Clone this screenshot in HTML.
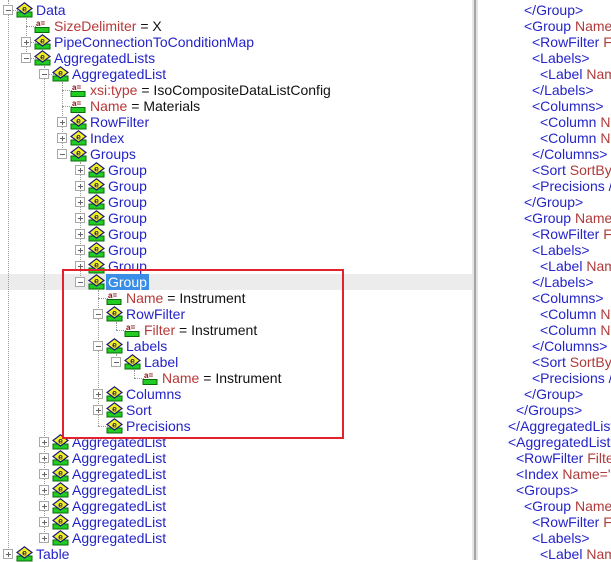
<!DOCTYPE html>
<html><head><meta charset="utf-8"><style>
body{margin:0;width:611px;height:560px;overflow:hidden;background:#fff;font-family:"Liberation Sans",sans-serif;font-size:14px;position:relative}
.r{position:absolute;height:16px;line-height:16px;white-space:nowrap}
.t{position:absolute;top:0;color:#2424c8}
.an{color:#b83838}.av{color:#111}
.x{position:absolute;width:8px;height:8px;border:1px solid #a8a8a8;background:#fff;top:3px}
.x:before{content:"";position:absolute;left:2px;top:4px;width:5px;height:1px;background:#666;margin-top:-0.5px}
.p:after{content:"";position:absolute;left:4px;top:2px;width:1px;height:5px;background:#666}
.i{position:absolute;top:0;width:17px;height:16px}
.v{position:absolute;width:0;border-left:1px dotted #9a9a9a}
.h{position:absolute;height:0;border-top:1px dotted #9a9a9a}
.rp{position:absolute;left:478px;top:0;width:133px;height:560px;overflow:hidden}
.rp div{position:absolute;height:16px;line-height:16px;white-space:nowrap;color:#2424c8}
.rp span{color:#b03a3a}
</style></head><body>
<svg width="0" height="0" style="position:absolute">
<symbol id="e" viewBox="0 0 17 16"><rect x="1" y="10" width="15" height="5" fill="#22cc22" stroke="#0a6a0a"/><path d="M8.5 0.8 L16 6.5 L8.5 12 L1 6.5 Z" fill="#f4f020" stroke="#1a1a7a" stroke-width="1.2"/><text x="8.5" y="9.4" font-size="8.5" font-family="Liberation Sans" text-anchor="middle" fill="#1a1a7a" font-weight="bold">e</text></symbol>
<symbol id="a" viewBox="0 0 17 16"><rect x="1" y="9.5" width="14" height="5" fill="#22cc22" stroke="#0a6a0a"/><text x="2" y="8" font-size="8" font-family="Liberation Sans" fill="#8a1010" font-weight="bold">a=</text></symbol>
</svg>
<div style="position:absolute;left:0;top:274px;width:472px;height:16px;background:#ececec"></div>
<div class="v" style="left:8px;top:0;height:554px"></div>
<div class="v" style="left:26px;top:18px;height:40px"></div>
<div class="v" style="left:44px;top:66px;height:472px"></div>
<div class="v" style="left:62px;top:82px;height:72px"></div>
<div class="v" style="left:80px;top:162px;height:120px"></div>
<div class="v" style="left:98px;top:290px;height:136px"></div>
<div class="v" style="left:116px;top:322px;height:8px"></div>
<div class="v" style="left:116px;top:354px;height:8px"></div>
<div class="v" style="left:134px;top:370px;height:8px"></div>
<div class="r" style="top:2px;left:0"><div class="h" style="left:8px;top:8px;width:10px"></div><div class="x" style="left:3px"></div><svg class="i" style="left:16px"><use href="#e"/></svg><span class="t" style="left:36px">Data</span></div>
<div class="r" style="top:18px;left:0"><div class="h" style="left:26px;top:8px;width:10px"></div><svg class="i" style="left:34px"><use href="#a"/></svg><span class="t" style="left:54px"><span class="an">SizeDelimiter</span><span class="av"> = X</span></span></div>
<div class="r" style="top:34px;left:0"><div class="h" style="left:26px;top:8px;width:10px"></div><div class="x p" style="left:21px"></div><svg class="i" style="left:34px"><use href="#e"/></svg><span class="t" style="left:54px">PipeConnectionToConditionMap</span></div>
<div class="r" style="top:50px;left:0"><div class="h" style="left:26px;top:8px;width:10px"></div><div class="x" style="left:21px"></div><svg class="i" style="left:34px"><use href="#e"/></svg><span class="t" style="left:54px">AggregatedLists</span></div>
<div class="r" style="top:66px;left:0"><div class="h" style="left:44px;top:8px;width:10px"></div><div class="x" style="left:39px"></div><svg class="i" style="left:52px"><use href="#e"/></svg><span class="t" style="left:72px">AggregatedList</span></div>
<div class="r" style="top:82px;left:0"><div class="h" style="left:62px;top:8px;width:10px"></div><svg class="i" style="left:70px"><use href="#a"/></svg><span class="t" style="left:90px"><span class="an">xsi:type</span><span class="av"> = IsoCompositeDataListConfig</span></span></div>
<div class="r" style="top:98px;left:0"><div class="h" style="left:62px;top:8px;width:10px"></div><svg class="i" style="left:70px"><use href="#a"/></svg><span class="t" style="left:90px"><span class="an">Name</span><span class="av"> = Materials</span></span></div>
<div class="r" style="top:114px;left:0"><div class="x p" style="left:57px"></div><svg class="i" style="left:70px"><use href="#e"/></svg><span class="t" style="left:90px">RowFilter</span></div>
<div class="r" style="top:130px;left:0"><div class="x p" style="left:57px"></div><svg class="i" style="left:70px"><use href="#e"/></svg><span class="t" style="left:90px">Index</span></div>
<div class="r" style="top:146px;left:0"><div class="x" style="left:57px"></div><svg class="i" style="left:70px"><use href="#e"/></svg><span class="t" style="left:90px">Groups</span></div>
<div class="r" style="top:162px;left:0"><div class="x p" style="left:75px"></div><svg class="i" style="left:88px"><use href="#e"/></svg><span class="t" style="left:108px">Group</span></div>
<div class="r" style="top:178px;left:0"><div class="x p" style="left:75px"></div><svg class="i" style="left:88px"><use href="#e"/></svg><span class="t" style="left:108px">Group</span></div>
<div class="r" style="top:194px;left:0"><div class="x p" style="left:75px"></div><svg class="i" style="left:88px"><use href="#e"/></svg><span class="t" style="left:108px">Group</span></div>
<div class="r" style="top:210px;left:0"><div class="x p" style="left:75px"></div><svg class="i" style="left:88px"><use href="#e"/></svg><span class="t" style="left:108px">Group</span></div>
<div class="r" style="top:226px;left:0"><div class="x p" style="left:75px"></div><svg class="i" style="left:88px"><use href="#e"/></svg><span class="t" style="left:108px">Group</span></div>
<div class="r" style="top:242px;left:0"><div class="x p" style="left:75px"></div><svg class="i" style="left:88px"><use href="#e"/></svg><span class="t" style="left:108px">Group</span></div>
<div class="r" style="top:258px;left:0"><div class="x p" style="left:75px"></div><svg class="i" style="left:88px"><use href="#e"/></svg><span class="t" style="left:108px">Group</span></div>
<div class="r" style="top:274px;left:0"><div class="x" style="left:75px"></div><svg class="i" style="left:88px"><use href="#e"/></svg><span class="t" style="left:106px;background:#3a8ee6;color:#fff;padding:0 2px">Group</span></div>
<div class="r" style="top:290px;left:0"><div class="h" style="left:98px;top:8px;width:10px"></div><svg class="i" style="left:106px"><use href="#a"/></svg><span class="t" style="left:126px"><span class="an">Name</span><span class="av"> = Instrument</span></span></div>
<div class="r" style="top:306px;left:0"><div class="x" style="left:93px"></div><svg class="i" style="left:106px"><use href="#e"/></svg><span class="t" style="left:126px">RowFilter</span></div>
<div class="r" style="top:322px;left:0"><div class="h" style="left:116px;top:8px;width:10px"></div><svg class="i" style="left:124px"><use href="#a"/></svg><span class="t" style="left:144px"><span class="an">Filter</span><span class="av"> = Instrument</span></span></div>
<div class="r" style="top:338px;left:0"><div class="x" style="left:93px"></div><svg class="i" style="left:106px"><use href="#e"/></svg><span class="t" style="left:126px">Labels</span></div>
<div class="r" style="top:354px;left:0"><div class="x" style="left:111px"></div><svg class="i" style="left:124px"><use href="#e"/></svg><span class="t" style="left:144px">Label</span></div>
<div class="r" style="top:370px;left:0"><div class="h" style="left:134px;top:8px;width:10px"></div><svg class="i" style="left:142px"><use href="#a"/></svg><span class="t" style="left:162px"><span class="an">Name</span><span class="av"> = Instrument</span></span></div>
<div class="r" style="top:386px;left:0"><div class="x p" style="left:93px"></div><svg class="i" style="left:106px"><use href="#e"/></svg><span class="t" style="left:126px">Columns</span></div>
<div class="r" style="top:402px;left:0"><div class="x p" style="left:93px"></div><svg class="i" style="left:106px"><use href="#e"/></svg><span class="t" style="left:126px">Sort</span></div>
<div class="r" style="top:418px;left:0"><div class="h" style="left:98px;top:8px;width:10px"></div><svg class="i" style="left:106px"><use href="#e"/></svg><span class="t" style="left:126px">Precisions</span></div>
<div class="r" style="top:434px;left:0"><div class="x p" style="left:39px"></div><svg class="i" style="left:52px"><use href="#e"/></svg><span class="t" style="left:72px">AggregatedList</span></div>
<div class="r" style="top:450px;left:0"><div class="x p" style="left:39px"></div><svg class="i" style="left:52px"><use href="#e"/></svg><span class="t" style="left:72px">AggregatedList</span></div>
<div class="r" style="top:466px;left:0"><div class="x p" style="left:39px"></div><svg class="i" style="left:52px"><use href="#e"/></svg><span class="t" style="left:72px">AggregatedList</span></div>
<div class="r" style="top:482px;left:0"><div class="x p" style="left:39px"></div><svg class="i" style="left:52px"><use href="#e"/></svg><span class="t" style="left:72px">AggregatedList</span></div>
<div class="r" style="top:498px;left:0"><div class="x p" style="left:39px"></div><svg class="i" style="left:52px"><use href="#e"/></svg><span class="t" style="left:72px">AggregatedList</span></div>
<div class="r" style="top:514px;left:0"><div class="x p" style="left:39px"></div><svg class="i" style="left:52px"><use href="#e"/></svg><span class="t" style="left:72px">AggregatedList</span></div>
<div class="r" style="top:530px;left:0"><div class="x p" style="left:39px"></div><svg class="i" style="left:52px"><use href="#e"/></svg><span class="t" style="left:72px">AggregatedList</span></div>
<div class="r" style="top:546px;left:0"><div class="x p" style="left:3px"></div><svg class="i" style="left:16px"><use href="#e"/></svg><span class="t" style="left:36px">Table</span></div>
<div style="position:absolute;left:62px;top:269px;width:278px;height:166px;border:2px solid #e4222e"></div>
<div style="position:absolute;left:472px;top:0;width:2px;height:560px;background:#e6e6e6"></div>
<div style="position:absolute;left:474px;top:0;width:2px;height:560px;background:#a4a4a4"></div>
<div style="position:absolute;left:476px;top:0;width:2px;height:560px;background:#e2e2e2"></div>
<div class="rp">
<div style="top:2px;left:46px">&lt;/Group&gt;</div>
<div style="top:18px;left:46px">&lt;Group <span>Name</span></div>
<div style="top:34px;left:54px">&lt;RowFilter <span>Fi</span></div>
<div style="top:50px;left:54px">&lt;Labels&gt;</div>
<div style="top:66px;left:62px">&lt;Label <span>Nam</span></div>
<div style="top:82px;left:54px">&lt;/Labels&gt;</div>
<div style="top:98px;left:54px">&lt;Columns&gt;</div>
<div style="top:114px;left:62px">&lt;Column <span>N</span></div>
<div style="top:130px;left:62px">&lt;Column <span>N</span></div>
<div style="top:146px;left:54px">&lt;/Columns&gt;</div>
<div style="top:162px;left:54px">&lt;Sort <span>SortBy=</span></div>
<div style="top:178px;left:54px">&lt;Precisions /</div>
<div style="top:194px;left:46px">&lt;/Group&gt;</div>
<div style="top:210px;left:46px">&lt;Group <span>Name</span></div>
<div style="top:226px;left:54px">&lt;RowFilter <span>Fi</span></div>
<div style="top:242px;left:54px">&lt;Labels&gt;</div>
<div style="top:258px;left:62px">&lt;Label <span>Nam</span></div>
<div style="top:274px;left:54px">&lt;/Labels&gt;</div>
<div style="top:290px;left:54px">&lt;Columns&gt;</div>
<div style="top:306px;left:62px">&lt;Column <span>N</span></div>
<div style="top:322px;left:62px">&lt;Column <span>N</span></div>
<div style="top:338px;left:54px">&lt;/Columns&gt;</div>
<div style="top:354px;left:54px">&lt;Sort <span>SortBy=</span></div>
<div style="top:370px;left:54px">&lt;Precisions /</div>
<div style="top:386px;left:46px">&lt;/Group&gt;</div>
<div style="top:402px;left:38px">&lt;/Groups&gt;</div>
<div style="top:418px;left:30px">&lt;/AggregatedList&gt;</div>
<div style="top:434px;left:30px">&lt;AggregatedList</div>
<div style="top:450px;left:38px">&lt;RowFilter <span>Filter</span></div>
<div style="top:466px;left:38px">&lt;Index <span>Name='</span></div>
<div style="top:482px;left:38px">&lt;Groups&gt;</div>
<div style="top:498px;left:46px">&lt;Group <span>Name</span></div>
<div style="top:514px;left:54px">&lt;RowFilter <span>Fi</span></div>
<div style="top:530px;left:54px">&lt;Labels&gt;</div>
<div style="top:546px;left:62px">&lt;Label <span>Nam</span></div>
</div>
</body></html>
